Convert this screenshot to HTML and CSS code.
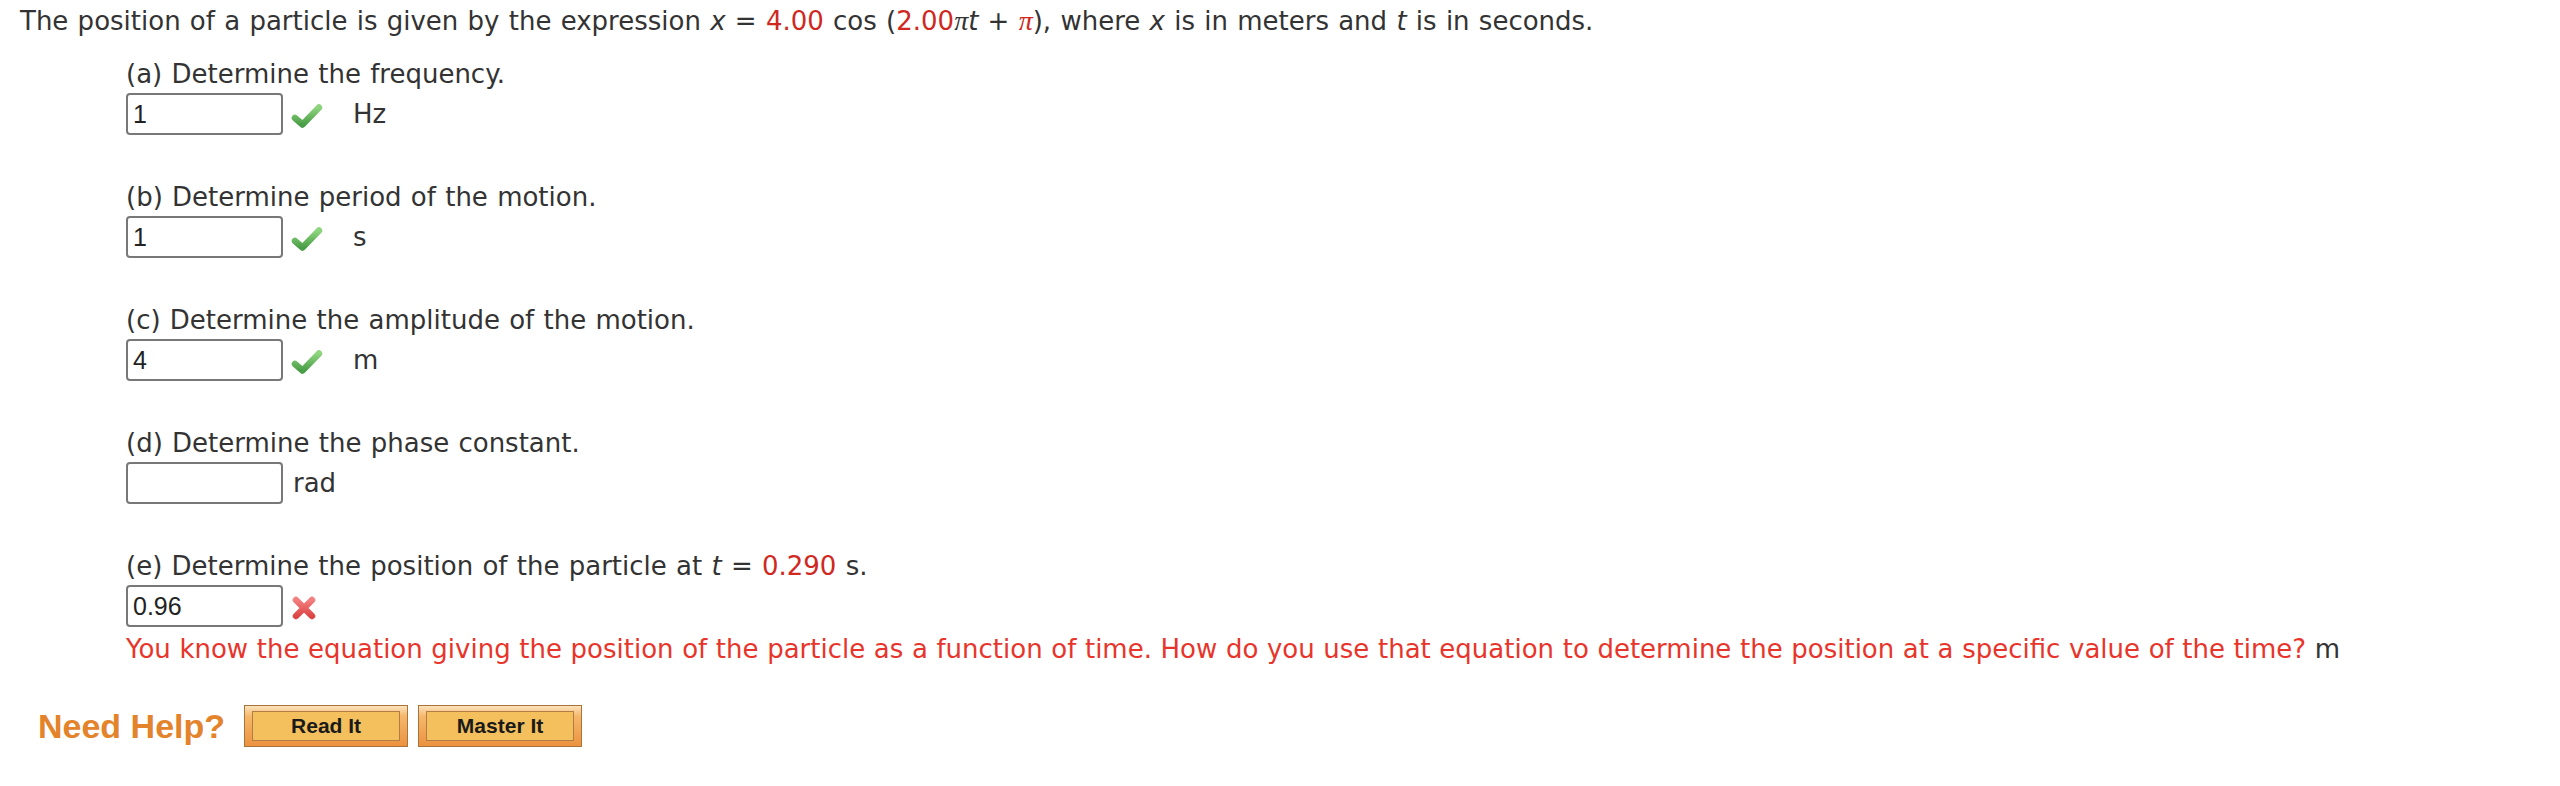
FILE: index.html
```html
<!DOCTYPE html>
<html>
<head>
<meta charset="utf-8">
<link rel="stylesheet" href="styles.css">
</head>
<body>
<div class="page">
  <p class="question">The position of a particle is given by the expression <span class="var">x</span> = <span class="val">4.00</span> cos (<span class="val">2.00</span><span class="pi">π</span><span class="var">t</span> + <span class="pi val">π</span>), where <span class="var">x</span> is in meters and <span class="var">t</span> is in seconds.</p>
  <div class="parts">
    <div class="part">
      <div class="label">(a) Determine the frequency.</div>
      <div class="row">
        <span class="answer">1</span>
        <span class="mark"><svg width="32" height="26" viewBox="0 0 32 26"><defs><linearGradient id="g1" x1="0" y1="0" x2="0" y2="1"><stop offset="0" stop-color="#8fd57f"/><stop offset="1" stop-color="#4a9e47"/></linearGradient></defs><path d="M4 15 L11.5 21.5 L28 4.5" fill="none" stroke="url(#g1)" stroke-width="6.5" stroke-linecap="round" stroke-linejoin="round"/></svg></span>
        <span class="unit">Hz</span>
      </div>
    </div>
    <div class="part">
      <div class="label">(b) Determine period of the motion.</div>
      <div class="row">
        <span class="answer">1</span>
        <span class="mark"><svg width="32" height="26" viewBox="0 0 32 26"><defs><linearGradient id="g2" x1="0" y1="0" x2="0" y2="1"><stop offset="0" stop-color="#8fd57f"/><stop offset="1" stop-color="#4a9e47"/></linearGradient></defs><path d="M4 15 L11.5 21.5 L28 4.5" fill="none" stroke="url(#g2)" stroke-width="6.5" stroke-linecap="round" stroke-linejoin="round"/></svg></span>
        <span class="unit">s</span>
      </div>
    </div>
    <div class="part">
      <div class="label">(c) Determine the amplitude of the motion.</div>
      <div class="row">
        <span class="answer">4</span>
        <span class="mark"><svg width="32" height="26" viewBox="0 0 32 26"><defs><linearGradient id="g3" x1="0" y1="0" x2="0" y2="1"><stop offset="0" stop-color="#8fd57f"/><stop offset="1" stop-color="#4a9e47"/></linearGradient></defs><path d="M4 15 L11.5 21.5 L28 4.5" fill="none" stroke="url(#g3)" stroke-width="6.5" stroke-linecap="round" stroke-linejoin="round"/></svg></span>
        <span class="unit">m</span>
      </div>
    </div>
    <div class="part">
      <div class="label">(d) Determine the phase constant.</div>
      <div class="row">
        <span class="answer"></span>
        <span class="unit plain">rad</span>
      </div>
    </div>
    <div class="part last">
      <div class="label">(e) Determine the position of the particle at <span class="var">t</span> = <span class="val">0.290</span> s.</div>
      <div class="row">
        <span class="answer">0.96</span>
        <span class="mark"><svg width="26" height="26" viewBox="0 0 26 26"><defs><linearGradient id="r1" x1="0" y1="0" x2="0" y2="1"><stop offset="0" stop-color="#f47f7f"/><stop offset="1" stop-color="#dc4545"/></linearGradient></defs><path d="M5 5 L21 21 M21 5 L5 21" fill="none" stroke="url(#r1)" stroke-width="6.5" stroke-linecap="round"/></svg></span>
      </div>
      <div class="hint"><span class="hint-text">You know the equation giving the position of the particle as a function of time. How do you use that equation to determine the position at a specific value of the time?</span> m</div>
    </div>
  </div>
  <div class="help">
    <span class="need">Need Help?</span>
    <span class="btn"><span class="btn-inner">Read It</span></span>
    <span class="btn"><span class="btn-inner">Master It</span></span>
  </div>
</div>
</body>
</html>
```

FILE: styles.css
```css
body {
  margin: 0;
  background: #ffffff;
  font-family: "DejaVu Sans", Verdana, sans-serif;
  font-size: 26px;
  word-spacing: 1px;
  color: #333333;
}

.page {
  padding: 3px 0 0 20px;
}

.question {
  margin: 0;
  line-height: 36px;
}

.var {
  font-style: italic;
}

.val {
  color: #d0281e;
}

.pi {
  font-family: "Liberation Serif", "DejaVu Serif", serif;
  font-style: italic;
  font-size: 28px;
}

.parts {
  margin-top: 17px;
  padding-left: 106px;
}

.part {
  margin-bottom: 44px;
}

.part.last {
  margin-bottom: 0;
}

.label {
  line-height: 36px;
}

.row {
  margin-top: 1px;
  height: 42px;
  display: flex;
  align-items: center;
}

.answer {
  box-sizing: border-box;
  width: 157px;
  height: 42px;
  border: 2px solid #787878;
  border-radius: 4px;
  padding-left: 5px;
  display: flex;
  align-items: center;
  font-family: "Liberation Sans", Arial, sans-serif;
  font-size: 25px;
  word-spacing: 0;
  color: #222222;
}

.mark {
  display: flex;
  align-items: center;
  margin-left: 8px;
  width: 62px;
  padding-top: 4px;
}

.unit {
  line-height: 36px;
}

.unit.plain {
  margin-left: 10px;
}

.hint {
  margin-top: 4px;
  line-height: 36px;
  word-spacing: 0.35px;
}

.hint-text {
  color: #e8352b;
}

.help {
  margin-top: 38px;
  padding-left: 18px;
  display: flex;
  align-items: center;
  gap: 10px;
  word-spacing: 0;
}

.need {
  font-family: "Liberation Sans", Arial, sans-serif;
  font-weight: bold;
  font-size: 34px;
  color: #e3842c;
  margin-right: 9px;
}

.btn {
  box-sizing: border-box;
  width: 164px;
  height: 42px;
  border: 1px solid #a8743a;
  background: linear-gradient(#fbe2bd 0%, #f6b86c 25%, #eb923f 100%);
  padding: 5px 7px 5px 7px;
  display: flex;
}

.btn-inner {
  flex: 1;
  border: 1px solid #b27d45;
  background: #f4c05e;
  display: flex;
  align-items: center;
  justify-content: center;
  font-family: "Liberation Sans", Arial, sans-serif;
  font-weight: bold;
  font-size: 21px;
  color: #1a1a1a;
}
```
